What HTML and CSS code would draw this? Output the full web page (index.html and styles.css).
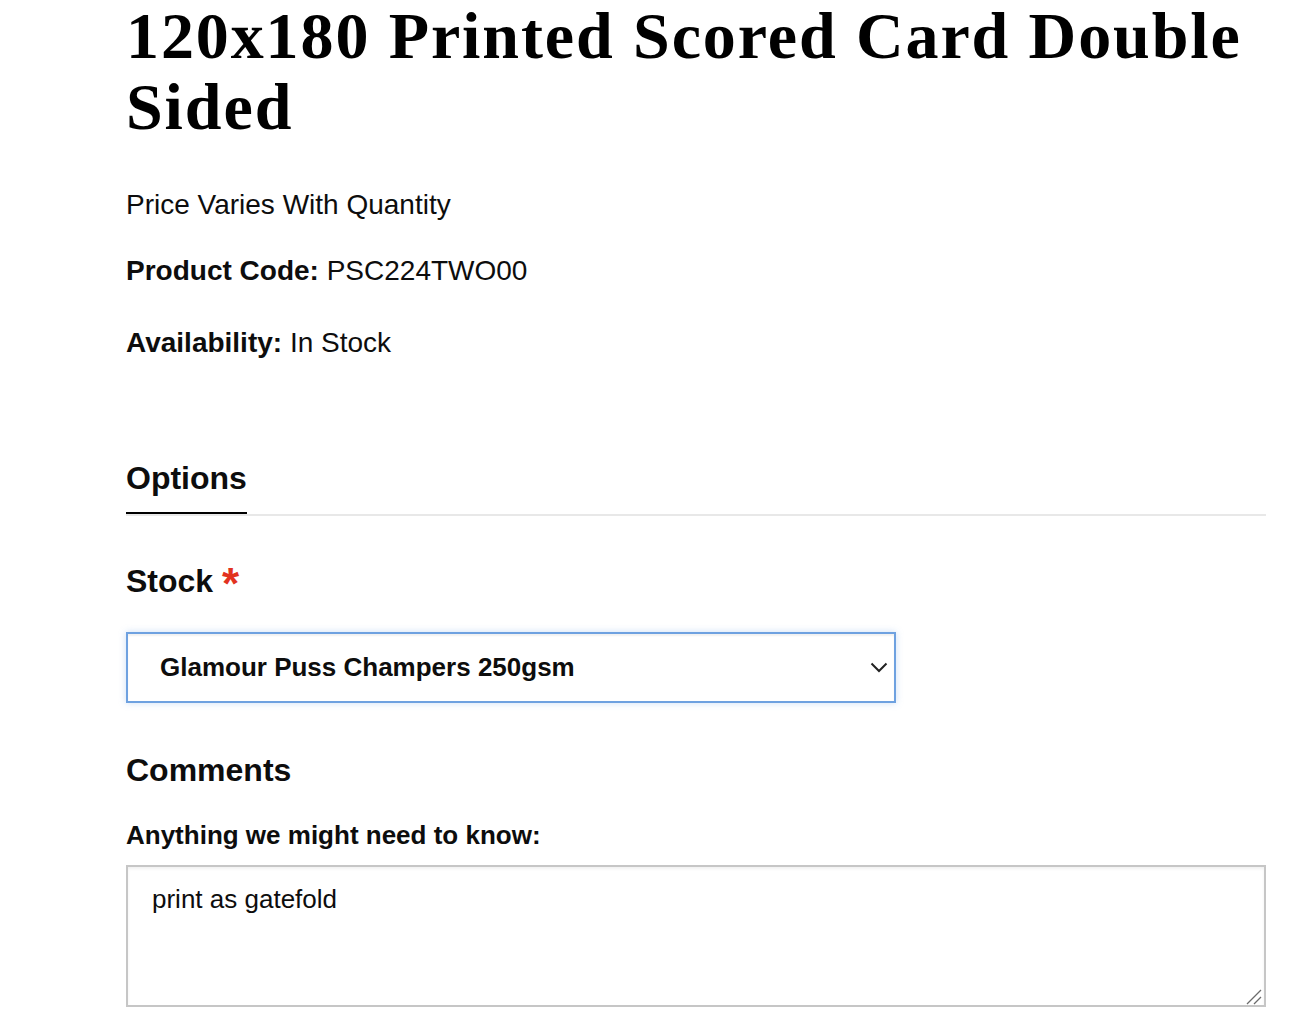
FILE: index.html
```html
<!DOCTYPE html>
<html lang="en">
<head>
<meta charset="utf-8">
<title>120x180 Printed Scored Card Double Sided</title>
<link rel="stylesheet" href="styles.css">
</head>
<body>
<main class="product">
  <h1 class="product-title">120x180 Printed Scored Card Double Sided</h1>
  <p class="price">Price Varies With Quantity</p>
  <p class="meta meta-code"><strong>Product Code:</strong> PSC224TWO00</p>
  <p class="meta meta-avail"><strong>Availability:</strong> In Stock</p>

  <ul class="tabs">
    <li class="tab active">Options</li>
  </ul>

  <div class="field">
    <label class="field-label">Stock <span class="required">*</span></label>
    <div class="select">
      <span class="select-value">Glamour Puss Champers 250gsm</span>
      <svg class="select-chevron" width="18" height="11" viewBox="0 0 18 11" aria-hidden="true">
        <path d="M1.5 1.5 L9 9 L16.5 1.5" fill="none" stroke="#222" stroke-width="2"/>
      </svg>
    </div>
  </div>

  <h2 class="section-title">Comments</h2>
  <label class="comment-label" for="comments">Anything we might need to know:</label>
  <div class="comment-wrap">
    <textarea id="comments" class="comment-box">print as gatefold</textarea>
    <svg class="resize-handle" width="16" height="16" viewBox="0 0 16 16" aria-hidden="true">
      <path d="M1 15 L15 1 M8 15 L15 8" fill="none" stroke="#6b6b6b" stroke-width="1.3"/>
    </svg>
  </div>
</main>
</body>
</html>
```
FILE: styles.css
```css
html, body {
  margin: 0;
  padding: 0;
  background: #fff;
}

body {
  font-family: "Liberation Sans", Arial, sans-serif;
  color: #0d0d0d;
}

.product {
  width: 1140px;
  margin-left: 126px;
  display: flex;
  flex-direction: column;
}

.product-title {
  margin: 0;
  font-family: "Liberation Serif", "Times New Roman", serif;
  font-weight: 700;
  font-size: 66px;
  line-height: 71px;
  letter-spacing: 1.9px;
  color: #000;
}

.price,
.meta {
  margin: 0;
  font-size: 28px;
  line-height: 40px;
}

.price {
  margin-top: 43px;
}

.meta-code {
  margin-top: 26px;
}

.meta-avail {
  margin-top: 32px;
}

.meta strong {
  font-weight: 700;
}

.tabs {
  list-style: none;
  margin: 95px 0 0;
  padding: 0;
  display: flex;
  border-bottom: 2px solid #e8e8e8;
}

.tab {
  font-size: 32px;
  font-weight: 700;
  line-height: 40px;
  padding-bottom: 14px;
  border-bottom: 2px solid #000;
}

.field {
  margin-top: 45px;
  display: flex;
  flex-direction: column;
}

.field-label {
  font-size: 32px;
  font-weight: 700;
  line-height: 40px;
}

.required {
  color: #e2321f;
  font-size: 44px;
  line-height: 0;
  vertical-align: -7px;
}

.select {
  margin-top: 31px;
  width: 770px;
  height: 71px;
  box-sizing: border-box;
  border: 2px solid #6ea1e0;
  box-shadow: 0 0 7px rgba(110, 160, 225, 0.35), inset 0 2px 2px rgba(0, 0, 0, 0.06);
  background: #fff;
  display: flex;
  align-items: center;
  justify-content: space-between;
  padding: 0 6px 0 32px;
}

.select-value {
  font-size: 26px;
  font-weight: 700;
}

.select-chevron {
  display: block;
}

.section-title {
  margin: 47px 0 0;
  font-size: 32px;
  font-weight: 700;
  line-height: 40px;
}

.comment-label {
  margin-top: 28px;
  font-size: 26px;
  font-weight: 700;
  line-height: 34px;
}

.comment-wrap {
  position: relative;
  margin-top: 13px;
}

.comment-box {
  width: 100%;
  height: 142px;
  box-sizing: border-box;
  border: 2px solid #c6c6c6;
  box-shadow: inset 0 2px 3px rgba(0, 0, 0, 0.06);
  padding: 15px 24px;
  font-family: "Liberation Sans", Arial, sans-serif;
  font-size: 26px;
  line-height: 34px;
  color: #0d0d0d;
  background: #fff;
  outline: none;
  resize: none;
  display: block;
}

.resize-handle {
  position: absolute;
  right: 4px;
  bottom: 2px;
}
```
